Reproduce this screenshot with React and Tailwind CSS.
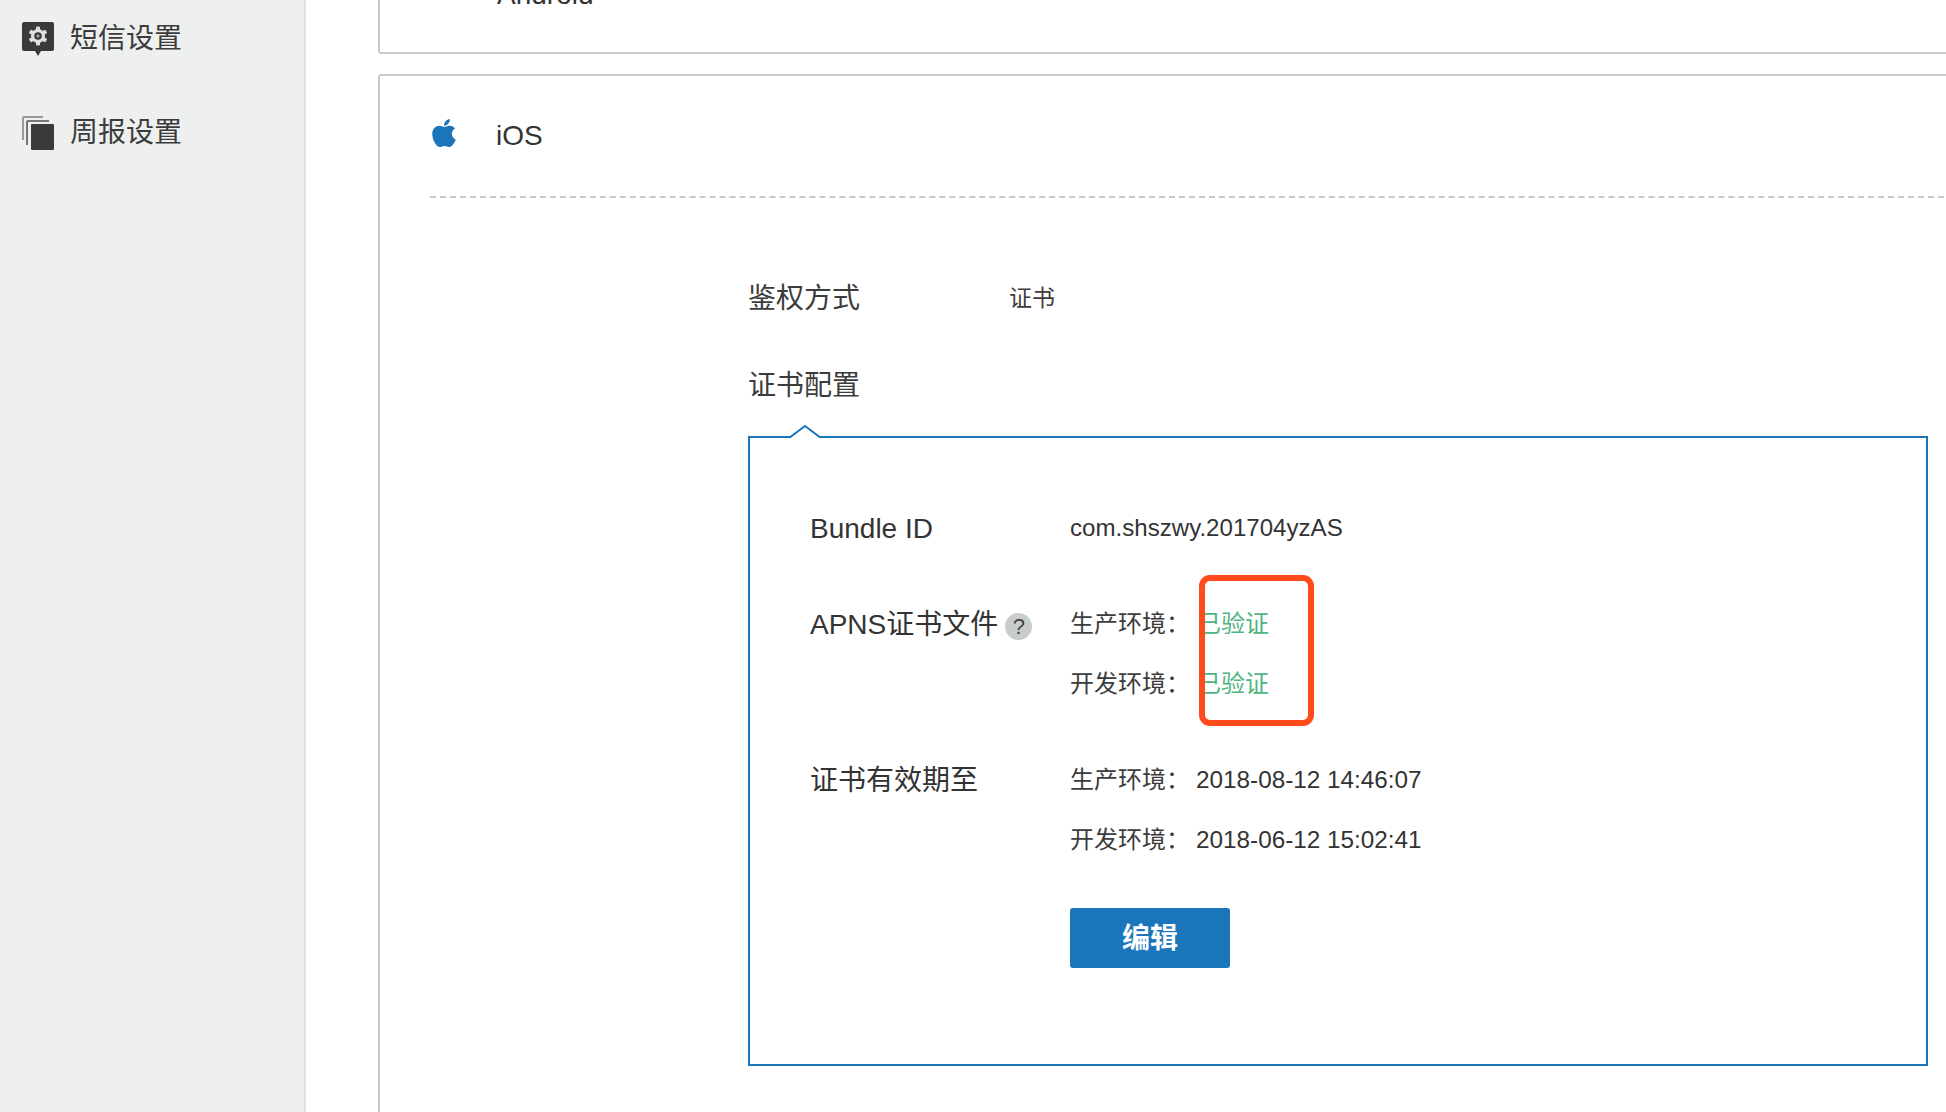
import React from 'react';
import { FaApple, FaAndroid } from 'react-icons/fa';

const FONT = "font-['Liberation_Sans','Noto_Sans_CJK_SC',sans-serif]";

const GearBubble = () => (
  <svg width="32" height="34" viewBox="0 0 32 34" className="shrink-0">
    <path d="M2 0h28a2 2 0 0 1 2 2v25a2 2 0 0 1-2 2h-11l-3 5-3-5H2a2 2 0 0 1-2-2V2a2 2 0 0 1 2-2z" fill="#3a3a3a" />
    <g transform="translate(16 14)" fill="#e0e0e0">
      <circle r="7" />
      <rect x="-2" y="-9.5" width="4" height="19" rx="1" />
      <rect x="-2" y="-9.5" width="4" height="19" rx="1" transform="rotate(60)" />
      <rect x="-2" y="-9.5" width="4" height="19" rx="1" transform="rotate(120)" />
      <circle r="3.8" fill="#3a3a3a" />
      <circle r="1.6" fill="#aaaaaa" />
    </g>
  </svg>
);

const Layers = () => (
  <svg width="32" height="34" viewBox="0 0 32 34" className="shrink-0">
    <path d="M1 24V2a1 1 0 0 1 1-1h19" fill="none" stroke="#9a9a9a" strokeWidth="2" />
    <path d="M5 29V6a1 1 0 0 1 1-1h21" fill="none" stroke="#777777" strokeWidth="2" />
    <rect x="9" y="8" width="23" height="26" rx="1" fill="#3a3a3a" />
  </svg>
);

const NavItem = ({ icon, label, className }) => (
  <div className={`flex items-center ${className}`}>
    <div className="w-[48px] flex justify-start">{icon}</div>
    <span className="text-[28px] leading-[40px] text-[#3c3c3c]">{label}</span>
  </div>
);

const EnvLine = ({ env, children }) => (
  <div className="flex items-center h-[60px] text-[24px]">
    <span className="w-[126px] text-[#3c3c3c]">{env}：</span>
    {children}
  </div>
);

const Row = ({ label, children, className = '' }) => (
  <div className={`flex ${className}`}>
    <div className="w-[260px] h-[60px] pt-[2px] flex items-center text-[28px] text-[#333333]">{label}</div>
    <div>{children}</div>
  </div>
);

export default function App() {
  return (
    <div className={`${FONT} flex h-[1112px] w-[1946px] overflow-hidden bg-white`}>
      {/* Sidebar */}
      <aside className="w-[306px] shrink-0 bg-[#eef0f0] border-r-2 border-[#e0e2e2] pl-[22px] pt-[19px]">
        <NavItem icon={<GearBubble />} label="短信设置" />
        <NavItem icon={<Layers />} label="周报设置" className="mt-[54px]" />
      </aside>

      <main className="flex-1 min-w-0 pl-[72px]">
        {/* Android card, scrolled mostly out of view */}
        <div className="h-[141px] -mt-[87px] -mr-[20px] border-2 border-[#c9c9c9] rounded-[3px] bg-white pl-[50px] pt-[60px]">
          <div className="flex items-center h-[40px] text-[28px] text-[#333333]">
            <FaAndroid className="w-[26px] h-[26px] text-[#1b75bb] ml-[3px] mr-[38px] -mt-[13px]" />
            <span>Android</span>
          </div>
        </div>

        {/* iOS card */}
        <div className="mt-[20px] -mr-[20px] h-[1100px] border-2 border-[#c9c9c9] rounded-[3px] bg-white pl-[50px]">
          <div className="h-[122px] border-b-2 border-dashed border-[#c9c9c9] flex items-center">
            <FaApple className="w-[30px] h-[32px] text-[#1b75bb] -ml-[1px] mr-[37px] -mt-[6px]" />
            <span className="text-[28px] text-[#333333]">iOS</span>
          </div>

          <div className="pl-[318px] pt-[79px]">
            <div className="flex items-center h-[44px]">
              <span className="w-[261px] text-[28px] text-[#3c3c3c]">鉴权方式</span>
              <span className="text-[23px] -mt-[1px] text-[#3c3c3c]">证书</span>
            </div>
            <div className="mt-[43px] h-[44px] flex items-center text-[28px] text-[#3c3c3c]">证书配置</div>

            {/* Certificate box */}
            <div className="relative mt-[28px] w-[1180px] h-[630px] border-2 border-[#1b75bb] pl-[60px] pt-[60px]">
              <svg width="36" height="14" viewBox="0 0 36 14" className="absolute -top-[14px] left-[37px]">
                <path d="M0 14h2L18 2l16 12h2" fill="#ffffff" stroke="#1b75bb" strokeWidth="2" />
              </svg>

              <Row label="Bundle ID">
                <div className="h-[60px] flex items-center text-[24.1px] text-[#333333]">com.shszwy.201704yzAS</div>
              </Row>

              <Row
                className="mt-[36px]"
                label={
                  <>
                    APNS证书文件
                    <span className="ml-[7px] mt-[2px] w-[27px] h-[27px] rounded-full bg-[#c8cccd] text-[#444444] text-[22px] flex items-center justify-center">?</span>
                  </>
                }
              >
                <EnvLine env="生产环境"><span className="ml-[1px] text-[#4fb583]">已验证</span></EnvLine>
                <EnvLine env="开发环境"><span className="ml-[1px] text-[#4fb583]">已验证</span></EnvLine>
              </Row>

              <Row className="mt-[36px]" label="证书有效期至">
                <EnvLine env="生产环境"><span className="text-[24.3px] text-[#333333]">2018-08-12 14:46:07</span></EnvLine>
                <EnvLine env="开发环境"><span className="text-[24.3px] text-[#333333]">2018-06-12 15:02:41</span></EnvLine>
              </Row>

              <button className="ml-[260px] mt-[38px] w-[160px] h-[60px] pt-[1px] rounded-[3px] bg-[#1b75bb] text-white text-[28px] font-bold">编辑</button>

              {/* Red annotation drawn over the screenshot */}
              <div className="absolute left-[449px] top-[137px] w-[115px] h-[151px] border-[6px] border-[#ff4a1c] rounded-[11px]" />
            </div>
          </div>
        </div>
      </main>
    </div>
  );
}
